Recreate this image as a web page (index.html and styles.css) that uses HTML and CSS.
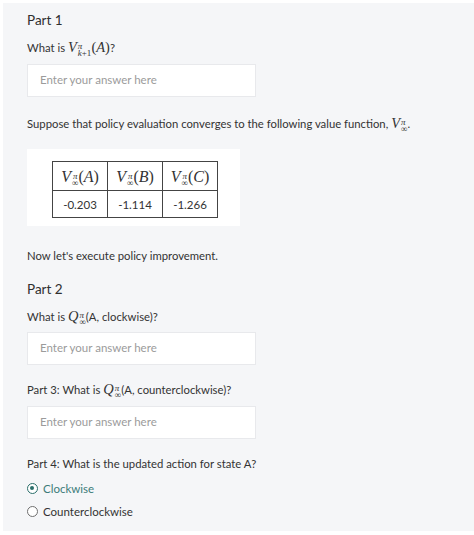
FILE: index.html
```html
<!DOCTYPE html>
<html>
<head>
<meta charset="utf-8">
<link rel="stylesheet" href="styles.css">
</head>
<body>
<div class="panel">
  <h2 class="part">Part 1</h2>
  <p class="q q1">What is <span class="m"><i>V</i><span class="ss"><span class="sup"><i>π</i></span><span class="sub"><i>k</i>+1</span></span>(<i>A</i>)</span>?</p>
  <div class="input in1">Enter your answer here</div>
  <p class="q q2">Suppose that policy evaluation converges to the following value function, <span class="m"><i>V</i><span class="ss"><span class="sup"><i>π</i></span><span class="sub">∞</span></span></span>.</p>
  <div class="figure">
    <table class="vt">
      <tr>
        <th><span class="m"><i>V</i><span class="ss"><span class="sup"><i>π</i></span><span class="sub">∞</span></span>(<i>A</i>)</span></th>
        <th><span class="m"><i>V</i><span class="ss"><span class="sup"><i>π</i></span><span class="sub">∞</span></span>(<i>B</i>)</span></th>
        <th><span class="m"><i>V</i><span class="ss"><span class="sup"><i>π</i></span><span class="sub">∞</span></span>(<i>C</i>)</span></th>
      </tr>
      <tr><td>-0.203</td><td>-1.114</td><td>-1.266</td></tr>
    </table>
  </div>
  <p class="q q3">Now let's execute policy improvement.</p>
  <h2 class="part part2">Part 2</h2>
  <p class="q q1">What is <span class="m"><i>Q</i><span class="ss"><span class="sup"><i>π</i></span><span class="sub">∞</span></span></span>(A, clockwise)?</p>
  <div class="input in2">Enter your answer here</div>
  <p class="q q4">Part 3: What is <span class="m"><i>Q</i><span class="ss"><span class="sup"><i>π</i></span><span class="sub">∞</span></span></span>(A, counterclockwise)?</p>
  <div class="input in1">Enter your answer here</div>
  <p class="q q4">Part 4: What is the updated action for state A?</p>
  <div class="options">
    <div class="opt sel"><span class="radio on"></span>Clockwise</div>
    <div class="opt"><span class="radio"></span>Counterclockwise</div>
  </div>
</div>
</body>
</html>
```
FILE: styles.css
```css
html, body { margin: 0; padding: 0; background: #ffffff; }
body { font-family: Lato, "Open Sans", sans-serif; color: #333333; }
.panel {
  margin: 3px 0 0 3px;
  height: 528px;
  box-sizing: border-box;
  background: #f5f6f8;
  padding: 7px 24px 0 24px;
}
.part { font-weight: 400; font-size: 13.5px; margin: 0; line-height: 20px; color: #2f2f2f; }
.part2 { margin-top: 13px; }
.q { font-size: 11.3px; margin: 0; line-height: 20px; color: #333; }
.q1 { margin-top: 8px; }
.q2 { margin-top: 17px; }
.q3 { margin-top: 20px; }
.q4 { margin-top: 15px; }
.input {
  width: 229px; height: 33px; box-sizing: border-box;
  background: #fff; border: 1px solid #e8e9ec;
  color: #9b9b9b; font-size: 11.5px; padding: 8px 0 0 12px;
}
.in1 { margin-top: 6px; }
.in2 { margin-top: 5px; }
.m { font-family: "Liberation Serif", serif; font-size: 14.5px; white-space: nowrap; line-height: 0; }
.m i { font-style: italic; }
.ss { display: inline-block; vertical-align: -4px; line-height: 7px; font-size: 9px; margin-left: 1px; }
.sup, .sub { display: block; }
.figure {
  width: 213px; height: 77px; box-sizing: border-box; background: #fff;
  margin-top: 15px; padding: 12px 0 0 25px;
}
.vt { border-collapse: collapse; }
.vt th, .vt td { border: 1px solid #444; padding: 0; text-align: center; width: 54px; }
.vt th { height: 28px; font-weight: 400; }
.vt th .m { font-size: 16px; }
.vt td { height: 26px; font-size: 11.5px; color: #333; }
.options { margin-top: 3px; }
.opt { display: flex; align-items: center; font-size: 11.5px; height: 23px; color: #333; }
.opt.sel { color: #3b7c78; }
.radio {
  width: 11px; height: 11px; border-radius: 50%; box-sizing: border-box;
  border: 1.5px solid #6f6f6f; margin-right: 5px; position: relative; background: #fff;
}
.radio.on { border-color: #2b6f6b; }
.radio.on::after {
  content: ""; position: absolute; left: 2px; top: 2px; width: 4px; height: 4px;
  border-radius: 50%; background: #2b6f6b;
}
```
